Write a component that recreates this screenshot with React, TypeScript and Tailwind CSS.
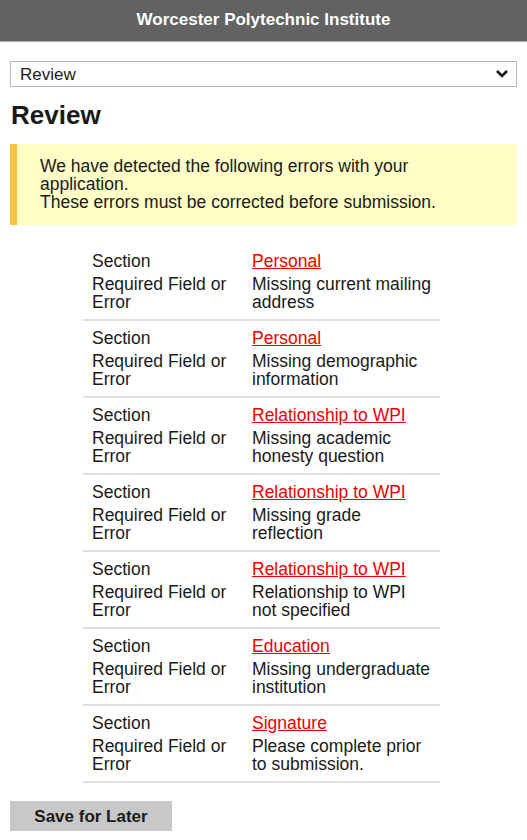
import React from "react";

const errors = [
  { section: "Personal", message: ["Missing current mailing", "address"] },
  { section: "Personal", message: ["Missing demographic", "information"] },
  { section: "Relationship to WPI", message: ["Missing academic", "honesty question"] },
  { section: "Relationship to WPI", message: ["Missing grade", "reflection"] },
  { section: "Relationship to WPI", message: ["Relationship to WPI", "not specified"] },
  { section: "Education", message: ["Missing undergraduate", "institution"] },
  { section: "Signature", message: ["Please complete prior", "to submission."] },
];

export default function App() {
  return (
    <div className="min-h-[840px] bg-white text-[#1a1a1a] [font-family:'Liberation_Sans',Arial,sans-serif]">
      <header className="h-[42px] bg-[#626262] border-b border-[#a9a9a9] flex items-center justify-center">
        <span className="text-white font-bold text-[17px] leading-none -mt-[3px]">
          Worcester Polytechnic Institute
        </span>
      </header>

      <main className="px-[10px]">
        <div className="mt-[19px] h-[26px] border border-[#b8b8b8] flex items-center justify-between pl-[9px] pr-[7px]">
          <span className="text-[17px] leading-none">Review</span>
          <svg width="14" height="10" viewBox="0 0 14 10" className="text-[#111]">
            <polyline points="2,2 7,7 12,2" fill="none" stroke="currentColor" strokeWidth="2.6" />
          </svg>
        </div>

        <h1 className="mt-[13px] pl-[1px] text-[26px] leading-[30px] font-bold">Review</h1>

        <div className="mt-[14px] bg-[#fefec6] border-l-[7px] border-[#f8c443] pl-[23px] pt-[13px] pb-[14px] text-[17.5px] leading-[18px]">
          We have detected the following errors with your
          <br />
          application.
          <br />
          These errors must be corrected before submission.
        </div>

        <div className="mt-[19px] ml-[73px] w-[357px]">
          {errors.map((row, i) => (
            <div key={i} className="border-b-2 border-[#dedede] pt-2 pb-2 pl-[9px] text-[17.5px] leading-[18px]">
              <div className="flex">
                <div className="w-[160px]">Section</div>
                <a href="#" className="text-[#ee0000] underline">
                  {row.section}
                </a>
              </div>
              <div className="flex mt-[5px]">
                <div className="w-[160px]">
                  Required Field or
                  <br />
                  Error
                </div>
                <div>
                  {row.message[0]}
                  <br />
                  {row.message[1]}
                </div>
              </div>
            </div>
          ))}
        </div>

        <button className="mt-[18px] w-[162px] h-[30px] bg-[#c8c8c8] font-bold text-[17px] leading-none">
          Save for Later
        </button>
      </main>
    </div>
  );
}
